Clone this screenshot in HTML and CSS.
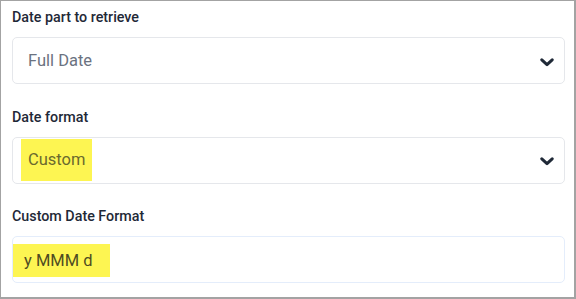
FILE: index.html
```html
<!DOCTYPE html>
<html lang="en">

<head>
    <meta charset="UTF-8">
    <meta name="viewport" content="width=device-width, initial-scale=1.0">
    <title>Date Settings</title>
    <link rel="stylesheet" href="styles.css">
</head>

<body>
    <div class="panel">
        <div class="field">
            <label class="field-label">Date part to retrieve</label>
            <div class="select">
                <span class="select-value">Full Date</span>
                <svg class="chevron" width="14" height="9" viewBox="0 0 14 9">
                    <polyline points="1.8,1.8 7,6.6 12.2,1.8" fill="none" stroke="#1f2937" stroke-width="3" stroke-linecap="round" stroke-linejoin="round" />
                </svg>
            </div>
        </div>

        <div class="field">
            <label class="field-label">Date format</label>
            <div class="select">
                <span class="select-value mark mark-custom">Custom</span>
                <svg class="chevron" width="14" height="9" viewBox="0 0 14 9">
                    <polyline points="1.8,1.8 7,6.6 12.2,1.8" fill="none" stroke="#1f2937" stroke-width="3" stroke-linecap="round" stroke-linejoin="round" />
                </svg>
            </div>
        </div>

        <div class="field">
            <label class="field-label">Custom Date Format</label>
            <div class="input">
                <span class="input-value mark mark-format">y MMM d</span>
            </div>
        </div>

        <div class="footer-band"></div>
    </div>
</body>

</html>
```

FILE: styles.css
```css
body {
    margin: 0;
    font-family: Roboto, "Liberation Sans", Arial, sans-serif;
    background-color: #fff;
}

.panel {
    width: 576px;
    height: 299px;
    box-sizing: border-box;
    border: 1px solid #a3a3a3;
    border-right-width: 2px;
    border-bottom-width: 2px;
    padding: 6px 9px 0 11px;
    background-color: #fff;
    overflow: hidden;
}

.field {
    margin-bottom: 22.5px;
}

.field:last-of-type {
    margin-bottom: 0;
}

.field-label {
    display: block;
    font-size: 14.3px;
    line-height: 20px;
    font-weight: 500;
    color: #1f2937;
    margin-bottom: 10px;
}

.select,
.input {
    height: 47px;
    box-sizing: border-box;
    border: 1px solid #e5e7eb;
    border-radius: 5px;
    display: flex;
    align-items: center;
    font-size: 16.5px;
}

.select {
    justify-content: space-between;
    padding: 0 10px 0 15px;
}

.input {
    border-color: #e4edfb;
}

.select-value {
    color: #6b7280;
}

.chevron {
    display: block;
    margin-top: 3px;
}

.mark {
    display: inline-block;
    background-color: #fdf552;
}

.mark-custom {
    color: #6a692e;
    margin-left: -7px;
    padding: 0 7px;
    line-height: 42px;
    margin-top: -1px;
}

.mark-format {
    color: #4e4b22;
    padding: 0 17px 0 11px;
    line-height: 33px;
    margin-top: 1px;
}

.footer-band {
    height: 7px;
    margin: 7px -9px 0 -11px;
    background-color: #f7f8fa;
}
```
